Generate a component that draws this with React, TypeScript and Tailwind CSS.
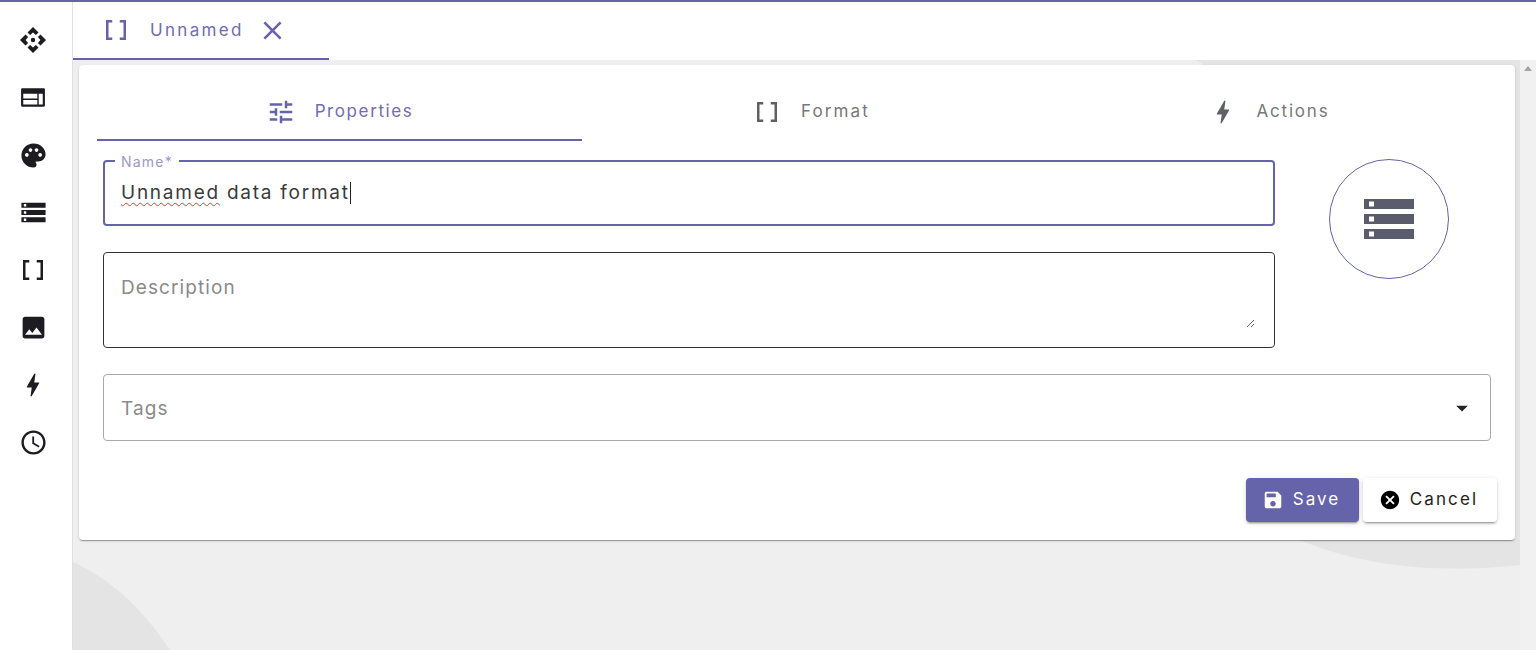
import {
  MdAccessTime,
  MdArrowDropDown,
  MdBolt,
  MdCancel,
  MdClose,
  MdDataArray,
  MdImage,
  MdPalette,
  MdSave,
  MdStorage,
  MdTune,
} from 'react-icons/md';

function MoveIcon({ className }: { className?: string }) {
  return (
    <svg viewBox="0 0 26 26" className={className} fill="currentColor">
      <path d="M13 0l5.5 5.5-2.6 2.6L13 5.6l-2.9 2.5-2.6-2.6L13 0Z" />
      <path d="M13 26l5.5-5.5-2.6-2.6-2.9 2.5-2.9-2.5-2.6 2.6L13 26Z" />
      <path d="M0 13l5.5-5.5 2.6 2.6L5.6 13l2.5 2.9-2.6 2.6L0 13Z" />
      <path d="M26 13l-5.5-5.5-2.6 2.6 2.5 2.9-2.5 2.9 2.6 2.6L26 13Z" />
      <circle cx="13" cy="13" r="2.2" />
    </svg>
  );
}

function LayoutIcon({ className }: { className?: string }) {
  return (
    <svg viewBox="0 0 24 24" className={className} fill="currentColor">
      <path d="M2 3h20a1 1 0 0 1 1 1v15a1 1 0 0 1-1 1H2a1 1 0 0 1-1-1V4a1 1 0 0 1 1-1Zm1 5v4.5h13V8H3Zm0 5.8V18h13v-4.2H3ZM17.3 8v10H21V8h-3.7Z" />
    </svg>
  );
}

const sideIcons = [
  { icon: MoveIcon, size: 'w-[26px] h-[26px]' },
  { icon: LayoutIcon, size: 'w-[26px] h-[26px]' },
  { icon: MdPalette, size: 'w-[29px] h-[29px]' },
  { icon: MdStorage, size: 'w-[29px] h-[29px]' },
  { icon: MdDataArray, size: 'w-[30px] h-[30px]' },
  { icon: MdImage, size: 'w-[29px] h-[29px]' },
  { icon: MdBolt, size: 'w-[30px] h-[30px]' },
  { icon: MdAccessTime, size: 'w-[29px] h-[29px]' },
];

const tabs = [
  { label: 'Properties', icon: MdTune, active: true, width: 'w-[485px]', track: 'tracking-[1.6px]' },
  { label: 'Format', icon: MdDataArray, active: false, width: 'w-[458px]', track: 'tracking-[2.1px]' },
  { label: 'Actions', icon: MdBolt, active: false, width: 'w-[457px]', track: 'tracking-[1.8px]' },
];

export default function App() {
  return (
    <div className="h-[650px] w-[1536px] flex flex-col overflow-hidden bg-white border-t-2 border-[#6563a9] font-['Inter',sans-serif] text-[#333]">
      <div className="flex flex-1 min-h-0">
        <aside className="w-[73px] shrink-0 bg-white border-r border-[#e0e0e0] pt-[9.5px] pr-[6px] flex flex-col">
          {sideIcons.map((s, i) => (
            <div key={i} className="h-[57.5px] shrink-0 flex items-center justify-center">
              <s.icon className={`${s.size} text-[#1c1c22]`} />
            </div>
          ))}
        </aside>

        <main className="flex-1 min-w-0 flex flex-col">
          <header className="h-[58px] shrink-0 bg-white flex">
            <div className="w-[256px] h-[58px] border-b-2 border-[#6563a9] pl-[28px] flex items-center text-[#6563a9]">
              <MdDataArray className="w-[30px] h-[30px]" />
              <span className="ml-[19px] mt-[2px] text-[17px] tracking-[2.3px] text-[#6f6dae]">Unnamed</span>
              <MdClose className="ml-[13px] w-[31px] h-[31px]" />
            </div>
          </header>

          <div className="relative flex-1 min-h-0 bg-[#efefef] flex">
            <svg className="absolute left-0 top-0 w-[1447px] h-[590px]" viewBox="0 0 1447 590">
              <path d="M1122 0 C1180 20 1210 350 1227 480 C1290 507 1370 514 1447 505 L1447 0 Z" fill="#e4e4e4" />
              <path d="M0 502 C40 520 70 550 97 590 L0 590 Z" fill="#e4e4e4" />
            </svg>

            <div className="relative flex-1 min-w-0 pl-[6px] pr-[5px] pt-[5px]">
              <section className="h-[475px] bg-white rounded-[4px] shadow-[0_2px_1px_-1px_rgba(0,0,0,0.2),0_1px_1px_0_rgba(0,0,0,0.14),0_1px_3px_0_rgba(0,0,0,0.12)] pt-[17px]">
                <nav className="flex ml-[18px]">
                  {tabs.map((t) => (
                    <div
                      key={t.label}
                      className={`${t.width} h-[59px] flex items-center justify-center gap-[19px] ${t.active ? 'border-b-2 border-[#6563a9] text-[#6563a9] pt-[2px]' : 'text-[#5f5f66]'}`}
                    >
                      <t.icon className="w-[30px] h-[30px]" />
                      <span className={`mt-[1px] text-[17px] ${t.track} ${t.active ? 'text-[#6f6dae]' : 'text-[#77777c]'}`}>{t.label}</span>
                    </div>
                  ))}
                </nav>

                <div className="mt-[19px] ml-[24px] flex">
                  <div className="w-[1172px] flex flex-col gap-[26px]">
                    <div className="relative h-[66px] border-2 border-[#6563a9] rounded-[4px] pl-[16px] flex items-center">
                      <span className="absolute -top-[8px] left-[10px] bg-white px-[6px] text-[14px] leading-[16px] tracking-[1.2px] text-[#9b99cb]">
                        Name*
                      </span>
                      <span className="text-[19px] tracking-[1.75px] text-[#3a3a3a]">
                        <span className="underline decoration-wavy decoration-[#e53935] decoration-1 underline-offset-[3px]">Unnamed</span> data format
                      </span>
                      <span className="w-px h-[22px] bg-[#222]" />
                    </div>

                    <div className="h-[96px] border border-[#333] rounded-[4px] pl-[17px] pr-[19px] pt-[22px]">
                      <textarea
                        placeholder="Description"
                        className="block w-full h-[53px] resize-y outline-none text-[19px] leading-[26px] tracking-[1.1px] placeholder:text-[#8a8a8a] bg-transparent"
                      />
                    </div>
                  </div>

                  <div className="ml-[54px] -mt-[1px] w-[120px] h-[120px] rounded-full border border-[#6563a9] flex items-center justify-center">
                    <MdStorage className="w-[60px] h-[60px] text-[#5a5c6d]" />
                  </div>
                </div>

                <div className="mt-[26px] ml-[24px] mr-[24px] h-[67px] border border-[#aaaaaa] rounded-[4px] pl-[17px] pr-[14px] flex items-center justify-between">
                  <span className="mt-[3px] text-[19px] tracking-[1.1px] text-[#8a8a8a]">Tags</span>
                  <MdArrowDropDown className="w-[28px] h-[28px] text-[#222]" />
                </div>

                <div className="mt-[37px] mr-[18px] flex justify-end gap-[4px]">
                  <button className="w-[113px] h-[44px] rounded-[4px] bg-[#6563a9] text-white flex items-center justify-center gap-[9px] pb-[1px] pr-[3px] text-[17px] tracking-[2.1px] shadow-[0_3px_1px_-2px_rgba(0,0,0,0.2),0_2px_2px_0_rgba(0,0,0,0.14),0_1px_5px_0_rgba(0,0,0,0.12)]">
                    <MdSave className="w-[22px] h-[22px]" />
                    Save
                  </button>
                  <button className="w-[134px] h-[44px] rounded-[4px] bg-white text-[#222] flex items-center justify-center gap-[9px] pb-[1px] pr-[3px] text-[17px] tracking-[2.1px] shadow-[0_3px_1px_-2px_rgba(0,0,0,0.2),0_2px_2px_0_rgba(0,0,0,0.14),0_1px_5px_0_rgba(0,0,0,0.12)]">
                    <MdCancel className="w-[22px] h-[22px] text-black" />
                    Cancel
                  </button>
                </div>
              </section>
            </div>

            <div className="relative w-[16px] shrink-0 bg-[#f1f1f1] flex justify-center pt-[6px]">
              <div className="w-0 h-0 border-l-[4px] border-r-[4px] border-b-[5px] border-l-transparent border-r-transparent border-b-[#a3a3a3]" />
            </div>
          </div>
        </main>
      </div>
    </div>
  );
}
